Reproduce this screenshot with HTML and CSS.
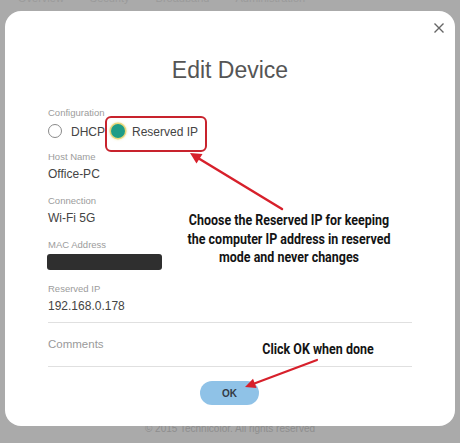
FILE: index.html
```html
<!DOCTYPE html>
<html>
<head>
<meta charset="utf-8">
<title>Edit Device</title>
<link rel="stylesheet" href="styles.css">
</head>
<body>
<div class="page">
  <nav class="topnav">
    <span>Overview</span><span>Security</span><span>Broadband</span><span>Administration</span>
  </nav>
  <footer class="footer">© 2015 Technicolor. All rights reserved</footer>
</div>

<div class="modal">
  <button class="close" aria-label="Close">
    <svg viewBox="0 0 10 10" width="10" height="10"><path d="M0.5 0.5 L9.5 9.5 M9.5 0.5 L0.5 9.5" stroke="#666" stroke-width="1.4" fill="none"/></svg>
  </button>
  <h1 class="title">Edit Device</h1>

  <div class="field config">
    <div class="label">Configuration</div>
    <div class="radios">
      <label class="radio"><span class="dot"></span>DHCP</label>
      <label class="radio checked"><span class="dot"></span>Reserved IP</label>
    </div>
  </div>

  <div class="field">
    <div class="label">Host Name</div>
    <div class="value">Office-PC</div>
  </div>

  <div class="field">
    <div class="label">Connection</div>
    <div class="value">Wi-Fi 5G</div>
  </div>

  <div class="field mac">
    <div class="label">MAC Address</div>
    <div class="redacted"></div>
  </div>

  <div class="field last">
    <div class="label">Reserved IP</div>
    <div class="value">192.168.0.178</div>
  </div>

  <div class="comments">Comments</div>

  <div class="actions"><button class="ok">OK</button></div>
</div>

<div class="annot-box"></div>
<svg class="arrows" viewBox="0 0 460 443" width="460" height="443">
  <line x1="282" y1="209" x2="198" y2="158" stroke="#d7202b" stroke-width="2.5" stroke-linecap="round"/>
  <polygon points="190,153 202.5,154 196.5,163.5" fill="#d7202b"/>
  <line x1="317" y1="360" x2="253" y2="384" stroke="#d7202b" stroke-width="2.2" stroke-linecap="round"/>
  <polygon points="245,387 256.5,388 253,378.8" fill="#d7202b"/>
</svg>
<p class="note note-reserved">Choose the Reserved IP for keeping<br>the computer IP address in reserved<br>mode and never changes</p>
<p class="note note-ok">Click OK when done</p>
</body>
</html>
```

FILE: styles.css
```css
html, body {
  margin: 0;
  padding: 0;
}
body {
  width: 460px;
  height: 443px;
  overflow: hidden;
  background: #aaaaaa;
  font-family: "Liberation Sans", Arial, sans-serif;
  position: relative;
}
.page {
  height: 443px;
  display: flex;
  flex-direction: column;
  justify-content: space-between;
}
.topnav {
  display: flex;
  gap: 26px;
  padding-left: 18px;
  margin-top: -9px;
  font-size: 11px;
  line-height: 14px;
  color: #9a9a9a;
}
.footer {
  text-align: center;
  font-size: 10px;
  line-height: 14px;
  padding-bottom: 7px;
  color: #8e8e8e;
}

.modal {
  position: absolute;
  left: 5px;
  top: 11px;
  width: 450px;
  height: 415px;
  box-sizing: border-box;
  padding: 45px 43px 0;
  background: #ffffff;
  border-radius: 16px;
}
.close {
  position: absolute;
  left: 429px;
  top: 12px;
  width: 10px;
  height: 10px;
  padding: 0;
  border: 0;
  background: none;
  display: block;
}
.close svg { display: block; }
.title {
  margin: 0;
  font-size: 23px;
  line-height: 28px;
  font-weight: normal;
  color: #555555;
  text-align: center;
}
.field {
  margin-bottom: 9px;
}
.config {
  margin-top: 21px;
  margin-bottom: 7px;
}
.label {
  font-size: 9.5px;
  line-height: 15px;
  color: #9c9c9c;
}
.value {
  margin-top: 1px;
  font-size: 12px;
  line-height: 19px;
  color: #444444;
}
.radios {
  display: flex;
  align-items: center;
  height: 22px;
}
.radio {
  display: flex;
  align-items: center;
  gap: 9px;
  font-size: 12px;
  line-height: 22px;
  color: #444444;
  padding-top: 2px;
}
.radio + .radio {
  margin-left: 6px;
  gap: 7px;
}
.dot {
  width: 14px;
  height: 14px;
  box-sizing: border-box;
  border-radius: 50%;
  border: 1px solid #8a8a8a;
  background: #ffffff;
  margin-top: -2px;
}
.radio.checked .dot {
  border: 0;
  background: #1f9c87;
  box-shadow: 0 0 0 1.5px rgba(228, 205, 95, 0.75), 0 0 2px 2px rgba(235, 220, 140, 0.5);
}
.mac {
  margin-bottom: 11px;
}
.redacted {
  margin-top: 2px;
  width: 115px;
  height: 16px;
  margin-left: -1px;
  border-radius: 3px;
  background: #2f2f2f;
}
.last {
  margin-bottom: 6px;
}
.comments {
  border-top: 1px solid #e0e0e0;
  border-bottom: 1px solid #e0e0e0;
  padding: 11px 0 12px;
  font-size: 11.5px;
  line-height: 20px;
  color: #9a9a9a;
}
.actions {
  display: flex;
  justify-content: center;
  margin-top: 14px;
}
.ok {
  width: 59px;
  height: 24px;
  border: 0;
  border-radius: 12px;
  background: #8fc2e7;
  color: #333a44;
  font-family: "Liberation Sans", Arial, sans-serif;
  font-weight: bold;
  font-size: 10px;
  padding: 0;
  margin-left: -1px;
}

.annot-box {
  position: absolute;
  left: 105px;
  top: 116px;
  width: 102px;
  height: 36px;
  box-sizing: border-box;
  border: 2px solid #c8232d;
  border-radius: 6px;
}
.arrows {
  position: absolute;
  left: 0;
  top: 0;
  pointer-events: none;
}
.note {
  position: absolute;
  margin: 0;
  font-family: Roboto, "DejaVu Sans", sans-serif;
  font-weight: bold;
  color: #141414;
  text-align: center;
  transform: scaleX(0.89);
  transform-origin: center top;
  white-space: nowrap;
}
.note-reserved {
  left: 129px;
  width: 320px;
  top: 211px;
  font-size: 14px;
  line-height: 18.5px;
}
.note-ok {
  left: 198px;
  width: 240px;
  top: 340px;
  font-size: 14px;
  line-height: 19px;
}
```
